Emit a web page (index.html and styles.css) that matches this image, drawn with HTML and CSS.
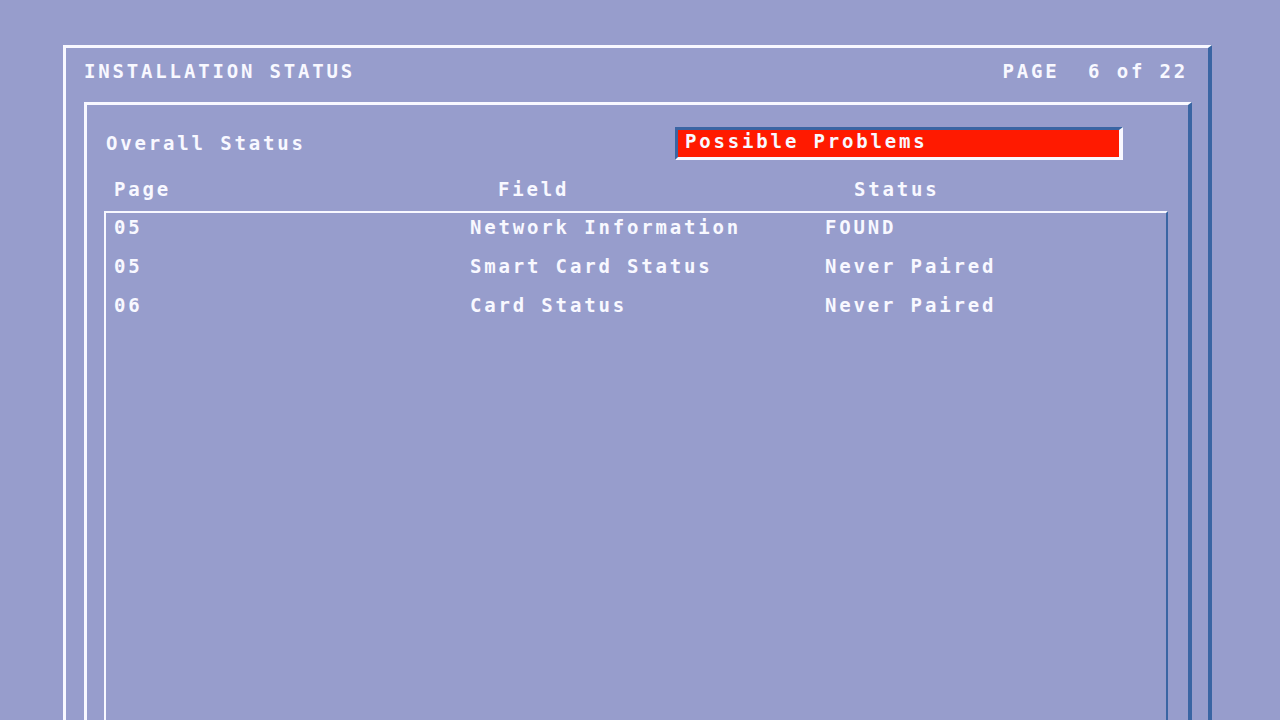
FILE: index.html
```html
<!DOCTYPE html>
<html lang="en">
<head>
<meta charset="utf-8">
<title>Installation Status</title>
<link rel="stylesheet" href="styles.css">
</head>
<body>
<div class="screen">
  <div class="outer">
    <div class="title-bar">
      <span class="title">INSTALLATION STATUS</span>
      <span class="pager">PAGE&nbsp;&nbsp;6 of 22</span>
    </div>
    <div class="inner">
      <div class="overall">
        <span class="overall-label">Overall Status</span>
        <div class="alert">Possible Problems</div>
      </div>
      <div class="col-heads">
        <span>Page</span>
        <span>Field</span>
        <span>Status</span>
      </div>
      <div class="table">
        <div class="row"><span>05</span><span>Network Information</span><span>FOUND</span></div>
        <div class="row"><span>05</span><span>Smart Card Status</span><span>Never Paired</span></div>
        <div class="row"><span>06</span><span>Card Status</span><span>Never Paired</span></div>
      </div>
    </div>
  </div>
</div>
</body>
</html>
```
FILE: styles.css
```css
html, body {
  margin: 0;
  padding: 0;
  height: 720px;
  overflow: hidden;
}
body {
  background: #979dcc;
  color: #f8f8ff;
  font-family: "DejaVu Sans Mono", "Liberation Mono", monospace;
  font-weight: bold;
  font-size: 19px;
  line-height: 22px;
  letter-spacing: 2.83px;
}
.screen {
  padding: 45px 0 0 63px;
}
.outer {
  width: 1149px;
  height: 760px;
  border-top: 3px solid #f8f8ff;
  border-left: 3px solid #f8f8ff;
  border-right: 4px solid #3a65a3;
  display: flex;
  flex-direction: column;
  padding: 12px 16px 0 18px;
  box-sizing: border-box;
}
.title-bar {
  display: flex;
  justify-content: space-between;
  padding-right: 4px;
}
.inner {
  margin-top: 20px;
  flex: 1;
  border-top: 3px solid #f8f8ff;
  border-left: 3px solid #f8f8ff;
  border-right: 4px solid #3a65a3;
  display: flex;
  flex-direction: column;
  padding-top: 22px;
}
.overall {
  display: flex;
  align-items: center;
  padding-left: 19px;
}
.overall-label {
  width: 569px;
  padding-bottom: 2px;
}
.alert {
  width: 434px;
  height: 27px;
  background: #ff1a00;
  border-top: 3px solid #3a65a3;
  border-left: 3px solid #3a65a3;
  border-right: 4px solid #f8f8ff;
  border-bottom: 3px solid #f8f8ff;
  padding: 0 0 0 7px;
}
.col-heads {
  display: grid;
  grid-template-columns: 384px 356px 1fr;
  padding-left: 27px;
  margin-top: 18px;
}
.table {
  margin: 11px 20px 0 17px;
  flex: 1;
  border-top: 2px solid #f8f8ff;
  border-left: 2px solid #f8f8ff;
  border-right: 2px solid #3a65a3;
  padding: 3px 0 0 8px;
  display: flex;
  flex-direction: column;
  gap: 17px;
}
.row {
  display: grid;
  grid-template-columns: 356px 355px 1fr;
}
```
